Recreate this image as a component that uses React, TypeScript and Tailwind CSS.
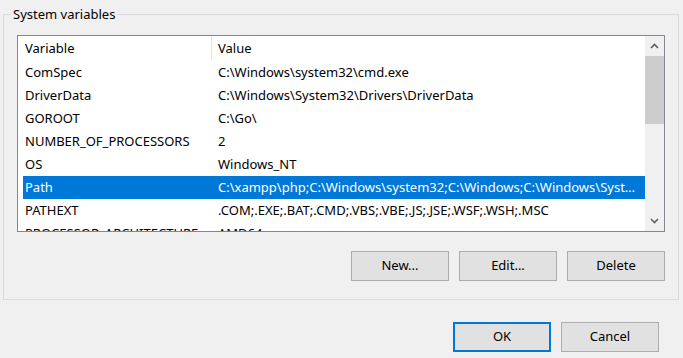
import React from 'react';

const rows = [
  { name: 'ComSpec', value: 'C:\\Windows\\system32\\cmd.exe' },
  { name: 'DriverData', value: 'C:\\Windows\\System32\\Drivers\\DriverData' },
  { name: 'GOROOT', value: 'C:\\Go\\' },
  { name: 'NUMBER_OF_PROCESSORS', value: '2' },
  { name: 'OS', value: 'Windows_NT' },
  {
    name: 'Path',
    value:
      'C:\\xampp\\php;C:\\Windows\\system32;C:\\Windows;C:\\Windows\\System32\\Wbem;C:\\Windows\\System32\\WindowsPowerShell\\v1.0\\',
    selected: true,
  },
  { name: 'PATHEXT', value: '.COM;.EXE;.BAT;.CMD;.VBS;.VBE;.JS;.JSE;.WSF;.WSH;.MSC' },
  { name: 'PROCESSOR_ARCHITECTURE', value: 'AMD64' },
];

function Chevron({ up }: { up?: boolean }) {
  return (
    <svg width="9" height="6" viewBox="0 0 9 6">
      <polyline
        points={up ? '1,5 4.5,1.5 8,5' : '1,1 4.5,4.5 8,1'}
        fill="none"
        stroke="#606060"
        strokeWidth="1.6"
      />
    </svg>
  );
}

function Button({
  label,
  primary,
}: {
  label: string;
  primary?: boolean;
}) {
  return (
    <div
      className={`w-[98px] h-[30px] flex items-center justify-center bg-[#e1e1e1] text-black ${
        primary ? 'border-2 border-[#0078d7]' : 'border border-[#adadad]'
      }`}
    >
      {label}
    </div>
  );
}

export default function App() {
  return (
    <div className="w-[683px] h-[358px] bg-[#f0f0f0] overflow-hidden font-['Segoe_UI','Noto_Sans',sans-serif] text-[13px] text-black">
      {/* System variables group */}
      <div className="relative mt-[14px] ml-[3px] w-[676px] h-[286px] border border-[#dcdcdc] pt-[20px] pl-[13px]">
        <span className="absolute left-[7px] top-[-9px] px-[2px] bg-[#f0f0f0] leading-[17px]">
          System variables
        </span>

        {/* List */}
        <div className="w-[648px] h-[197px] border border-[#828790] bg-white flex">
          <div className="w-[627px] overflow-hidden">
            <div className="h-[25px] flex items-center">
              <div className="w-[193px] pl-[7px]">Variable</div>
              <div className="h-[23px] border-l border-[#e5e5e5] pl-[6px] flex items-center">
                Value
              </div>
            </div>
            {rows.map((row) => (
              <div
                key={row.name}
                className={`ml-[5px] h-[23px] grid grid-cols-[193px_1fr] items-center leading-[23px] ${
                  row.selected ? 'bg-[#0078d7] text-white' : ''
                }`}
              >
                <div className="pl-[2px] whitespace-nowrap">{row.name}</div>
                <div className="pl-[2px] pr-[5px] truncate">{row.value}</div>
              </div>
            ))}
          </div>

          {/* Scrollbar */}
          <div className="w-[19px] bg-[#f0f0f0] flex flex-col">
            <div className="h-[20px] flex items-center justify-center">
              <Chevron up />
            </div>
            <div className="h-[68px] bg-[#cdcdcd]" />
            <div className="flex-1" />
            <div className="h-[20px] flex items-center justify-center">
              <Chevron />
            </div>
          </div>
        </div>

        {/* Group buttons */}
        <div className="mt-[19px] w-[648px] flex justify-end gap-[10px]">
          <Button label="New..." />
          <Button label="Edit..." />
          <Button label="Delete" />
        </div>
      </div>

      {/* Dialog buttons */}
      <div className="mt-[22px] mr-[24px] flex justify-end gap-[10px]">
        <Button label="OK" primary />
        <Button label="Cancel" />
      </div>
    </div>
  );
}
